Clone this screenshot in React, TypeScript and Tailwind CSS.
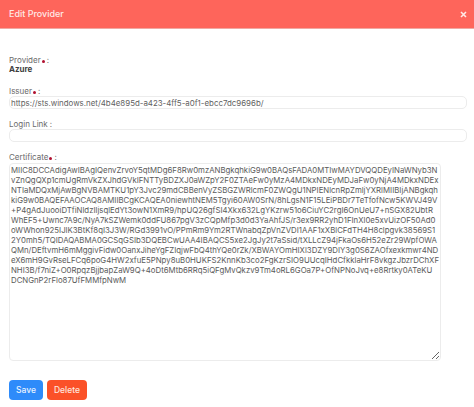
import React from 'react';

const certificate = [
  'MIIC8DCCAdigAwIBAgIQenvZrvoY5qtMDg6F8Rw0mzANBgkqhkiG9w0BAQsFADA0MTIwMAYDVQQDEyINaWNyb3N',
  'vZnQgQXp1cmUgRmVkZXJhdGVkIFNTTyBDZXJ0aWZpY2F0ZTAeFw0yMzA4MDkxNDEyMDJaFw0yNjA4MDkxNDEx',
  'NTIaMDQxMjAwBgNVBAMTKU1pY3Jvc29mdCBBenVyZSBGZWRlcmF0ZWQgU1NPIENlcnRpZmljYXRlMIIBIjANBgkqh',
  'kiG9w0BAQEFAAOCAQ8AMIIBCgKCAQEA0niewhtNEM5Tgyi60AW0SrN/8hLgsN1F15LEiPBDr7TeTfofNcw5KWVJ49V',
  '+P4gAdJuooiDTfiNldzIljsqlEdYt3owN1XmR9/hpUQ26gfSI4Xkx632LgYKzrw51o6CiuYC2rgI6OnUeU7+nSGX82UbtR',
  'WhEF5+Uwnc7A9c/NyA7kSZWemk0ddFU867pgV3zCQpMfp3d0d3YaAhfJS/r3ex9RR2yhD1FInXl0e5xvUizOF50Ad0',
  'oWWhon925IJlK3BtKf8qI3J3W/RGd3991vO/PPmRm9Ym2RTWnabqZpVnZVDI1AAF1xXBlCFdTH4H8clpgvk38569S1',
  '2Y0mh5/TQIDAQABMA0GCSqGSIb3DQEBCwUAA4IBAQCS5xe2JgJy2t7aSsid/tXLLcZ94jFkaOs6H52eZr29WpfOWA',
  'QMn/DEftvmH6mMggivFidw0OanxJiheYgFZIqjwFbQ4thYQe0rZk/XBWAYOmHIXl3DZY9DIY3g0S6ZAOfxexkmwr4ND',
  'eX6mH9GvRseLFCq6poG4HW2xfuE5PNpy8uB0HUKFS2KnnKb3co2FgKzrSIO9UUcqIHdCfkklaHrF8vkgzJbzrDChXF',
  'NHI3B/f7niZ+O0RpqzBjjbapZaW9Q+4oDt6Mtb6RRq5iQFgMvQkzv9Tm4oRL6GOa7P+OfNPNoJvq+e8Rrtky0ATeKU',
  'DCNGnP2rFlo87UfFMMfpNwM',
].join('\n');

function Label({ text, required }: { text: string; required?: boolean }) {
  return (
    <div className="flex h-[10px] items-center text-[8px] leading-[10px] text-[#6b6b6b]">
      <span>{text}</span>
      {required && <span className="ml-px mt-[2px] h-[3px] w-[3px] rounded-full bg-[#b01030]" />}
      <span className="ml-[2px]">:</span>
    </div>
  );
}

export default function App() {
  return (
    <div className="h-[407px] w-[474px] overflow-hidden bg-white font-['Inter',sans-serif]">
      {/* Header */}
      <header className="flex h-[29px] items-center justify-between border-b border-[#f0a8a2] bg-[#fe655b] pl-[9px] pr-[3px]">
        <span className="text-[9px] font-medium text-[#ffe9e6]">Edit Provider</span>
        <span className="flex h-[16px] w-[16px] items-center justify-center text-[#ffe9e6]">
          <svg width="7" height="7" viewBox="0 0 7 7" fill="none" stroke="currentColor" strokeWidth="1.6">
            <path d="M1 1l5 5M6 1l-5 5" />
          </svg>
        </span>
      </header>

      {/* Form */}
      <form className="flex flex-col px-[9px] pt-[26px]">
        <Label text="Provider" required />
        <div className="-mt-px h-[10px] text-[8px] font-bold leading-[10px] text-[#3f3f3f]">Azure</div>

        <div className="mt-[12px]">
          <Label text="Issuer" required />
        </div>
        <input
          readOnly
          value="https://sts.windows.net/4b4e895d-a423-4ff5-a0f1-ebcc7dc9696b/"
          className="h-[13px] w-[458px] rounded-[5px] border border-[#ececec] px-[1px] text-[7.9px] text-[#5f5f5f] outline-none"
        />

        <div className="mt-[10px]">
          <Label text="Login Link" />
        </div>
        <input
          readOnly
          value=""
          className="h-[13px] w-[458px] rounded-[5px] border border-[#ececec] px-[1px] text-[8px] outline-none"
        />

        <div className="mt-[10px]">
          <Label text="Certificate" required />
        </div>
        <textarea
          readOnly
          wrap="off"
          value={certificate}
          className="mt-px h-[198px] w-[432px] overflow-hidden rounded-[4px] border border-[#ececec] px-[1px] py-[1px] text-[7.8px] leading-[10px] text-[#5a5a5a] outline-none"
        />

        <div className="mt-[19px] flex gap-[4px]">
          <button type="button" className="h-[20px] w-[34px] rounded-[4px] bg-[#2e8bfa] text-[8.5px] font-medium text-[#e8f2ff]">
            Save
          </button>
          <button type="button" className="h-[20px] w-[40px] rounded-[4px] bg-[#fb5128] text-[8.5px] font-medium text-[#ffe6df]">
            Delete
          </button>
        </div>
      </form>
    </div>
  );
}
